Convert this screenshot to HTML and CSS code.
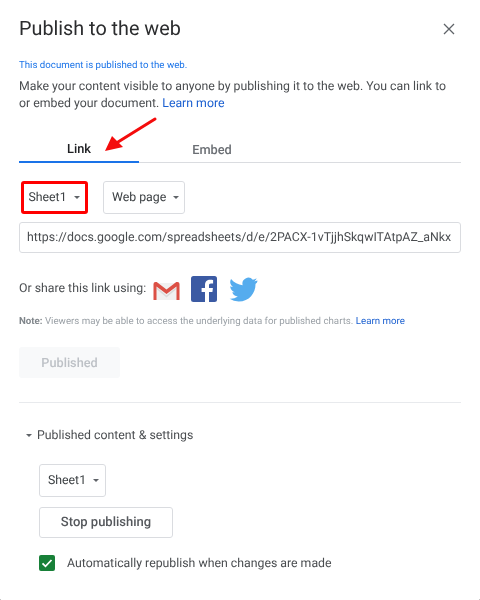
FILE: index.html
```html
<!DOCTYPE html>
<html lang="en">
<head>
<meta charset="utf-8">
<title>Publish to the web</title>
<link rel="stylesheet" href="styles.css">
</head>
<body>
<main class="dialog">
  <header class="head">
    <h1 class="title">Publish to the web</h1>
    <svg class="close" viewBox="0 0 12 12" width="12" height="12"><path d="M1 1l10 10M11 1L1 11" stroke="#5f6368" stroke-width="1.3" fill="none"/></svg>
  </header>
  <p class="status">This document is published to the web.</p>
  <p class="intro">Make your content visible to anyone by publishing it to the web. You can link to or embed your document. <a class="link">Learn more</a></p>
  <nav class="tabs">
    <div class="tab tab-active">Link</div>
    <div class="tab tab-other">Embed</div>
    <svg class="arrow" viewBox="0 0 66 40" width="66" height="40"><path d="M61 3L24 26" stroke="#f40c0c" stroke-width="3" stroke-linecap="round" fill="none"/><path d="M11 35L18 20L29 31Z" fill="#f40c0c"/></svg>
  </nav>
  <div class="selects">
    <div class="select select-marked">Sheet1<span class="caret"></span></div>
    <div class="select select-format">Web page<span class="caret"></span></div>
  </div>
  <div class="url">https://docs.google.com/spreadsheets/d/e/2PACX-1vTjjhSkqwITAtpAZ_aNkx</div>
  <div class="share">
    <span>Or share this link using:</span>
    <svg class="gmail" viewBox="0 0 27 20" width="27" height="20">
      <path d="M1 2h25v17H1z" fill="#f1f1f1"/>
      <path d="M3.500 6l10 8.500 10-8.500v2l-10 8.500-10-8.500z" fill="#dcdcdc"/>
      <path d="M0.500 3q0-2 2-2h1.200l9.800 7.500L23.300 1h1.200q2 0 2 2v16h-3V5.500l-10 7.500-10-7.500V19h-3z" fill="#dc5045"/>
    </svg>
    <svg class="fb" viewBox="0 0 26 26" width="26" height="26">
      <rect width="26" height="26" rx="2.500" fill="#3b5aa3"/>
      <path d="M18 26V16h3.400l.5-4H18V9.500c0-1.200.4-2 2-2h2.100V4c-.4 0-1.600-.2-3-.2-3 0-5.100 1.800-5.100 5.200v3h-3.400v4H14v10z" fill="#fff"/>
    </svg>
    <svg class="tw" viewBox="0 0 24 24" width="29" height="29">
      <path d="M23.500 4.600c-.9.400-1.800.6-2.800.8 1-.6 1.800-1.600 2.100-2.700-.9.600-2 1-3.100 1.200a4.900 4.900 0 0 0-8.400 4.500C7.700 8.200 4.100 6.200 1.700 3.300a4.900 4.900 0 0 0 1.500 6.600c-.8 0-1.500-.2-2.200-.6 0 2.400 1.700 4.400 3.900 4.900-.7.200-1.500.2-2.200.1.600 2 2.400 3.400 4.600 3.400A9.900 9.900 0 0 1 .5 19.700a14 14 0 0 0 7.500 2.200c9.100 0 14.200-7.700 13.900-14.500 1-.7 1.800-1.600 1.600-2.800z" fill="#55acee"/>
    </svg>
  </div>
  <p class="note"><b>Note:</b> Viewers may be able to access the underlying data for published charts. <a class="link">Learn more</a></p>
  <div class="published">Published</div>
  <hr class="rule">
  <div class="disclosure"><span class="caret caret-left"></span>Published content &amp; settings</div>
  <section class="settings">
    <div class="select select-sheet">Sheet1<span class="caret"></span></div>
    <div class="stop">Stop publishing</div>
    <div class="auto">
      <svg class="check" viewBox="0 0 16 16" width="16" height="16"><rect width="16" height="16" rx="2" fill="#188038"/><path d="M3.500 8.300l3 3 6-6.300" stroke="#fff" stroke-width="1.800" fill="none"/></svg>
      <span>Automatically republish when changes are made</span>
    </div>
  </section>
</main>
<span class="corner corner-left"></span>
<span class="corner corner-right"></span>
</body>
</html>
```
FILE: styles.css
```css
* { box-sizing: border-box; }
html, body { margin: 0; padding: 0; background: #fff; }
body { position: relative; width: 480px; height: 600px; overflow: hidden; font-family: Roboto, "Liberation Sans", sans-serif; color: #3c4043; text-rendering: geometricPrecision; }
.dialog { padding: 0 19px; filter: blur(0.45px); }
.head { display: flex; justify-content: space-between; align-items: center; height: 22px; margin-top: 18px; }
.title { margin: 0; font-size: 19.800px; font-weight: 400; color: #2b2c2e; line-height: 22px; }
.close { margin-right: 6px; }
.status { margin: 20px 0 0; font-size: 9.700px; line-height: 12px; color: #1a73e8; }
.intro { margin: 7px 0 0; padding-right: 8px; font-size: 12.300px; line-height: 17px; color: #4a4d50; }
.link { color: #1a5fd0; }
.tabs { position: relative; display: flex; margin-top: 22px; height: 28px; border-bottom: 1px solid #dadce0; font-size: 12.800px; font-weight: 500; }
.tab { height: 28px; display: flex; justify-content: center; align-items: center; padding-top: 3px; }
.tab-active { width: 120px; color: #202124; border-bottom: 2px solid #1a73e8; }
.tab-other { width: 146px; color: #6b6f74; }
.arrow { position: absolute; left: 75px; top: -19px; }
.selects { display: flex; gap: 15px; margin-top: 18px; padding-left: 2px; }
.select { display: flex; align-items: center; height: 33px; border: 1px solid #dadce0; border-radius: 3px; font-size: 12.300px; padding-left: 8px; color: #3c4043; }
.select-marked { width: 67px; border: 3.500px solid #f00; padding-left: 4.500px; }
.select-format { width: 82px; }
.caret { display: inline-block; margin-left: 7px; border-top: 3.500px solid #5f6368; border-left: 3.500px solid transparent; border-right: 3.500px solid transparent; }
.url { margin-top: 8px; height: 31px; padding: 0 7px; display: flex; align-items: center; border: 1px solid #dadce0; border-radius: 3px; font-size: 12.330px; white-space: nowrap; overflow: hidden; color: #4a4d50; }
.share { display: flex; align-items: center; height: 26px; margin-top: 23px; font-size: 12.300px; color: #4a4d50; }
.gmail { margin-left: 7px; margin-top: 3px; }
.fb { margin-left: 11px; }
.tw { margin-left: 11.500px; margin-top: 1px; }
.note { margin: 14px 0 0; font-size: 9.700px; line-height: 11px; color: #9aa0a6; }
.note b { color: #80868b; }
.published { margin-top: 20px; width: 101px; height: 31px; padding-top: 1px; border-radius: 3px; background: #f8f9fa; color: #bdc1c6; font-size: 12.700px; font-weight: 500; display: flex; justify-content: center; align-items: center; }
.rule { margin: 24px 0 0; border: 0; border-top: 1px solid #e8eaed; }
.disclosure { display: flex; align-items: center; margin-top: 24px; height: 17px; padding-left: 7px; font-size: 12.300px; color: #4a4d50; }
.caret-left { margin: 0 5px 0 0; }
.settings { padding-left: 20px; }
.select-sheet { width: 67px; margin-top: 20px; }
.stop { margin-top: 10px; width: 134px; height: 31px; border: 1px solid #dadce0; border-radius: 3px; font-size: 13px; font-weight: 500; color: #55585c; display: flex; justify-content: center; align-items: center; }
.auto { display: flex; align-items: center; gap: 12px; margin-top: 17px; font-size: 12.300px; color: #4a4d50; }
.check { margin-top: -1px; }
.auto span { padding-top: 2px; }
.corner { position: absolute; bottom: 0; width: 1px; height: 1px; background: #c4c4c4; }
.corner-left { left: 0; }
.corner-right { right: 0; }
```
